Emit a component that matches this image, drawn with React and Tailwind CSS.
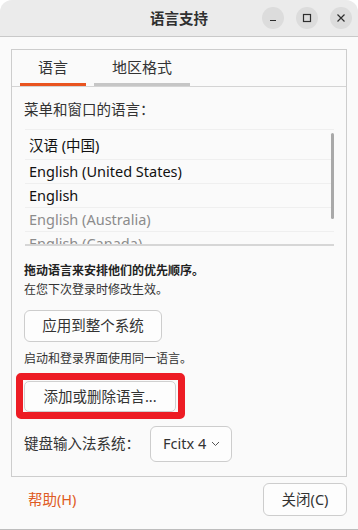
import React from "react";

const font = { fontFamily: '"Noto Sans", "Noto Sans CJK SC", sans-serif' };

const langs = [
  { label: "汉语 (中国)", active: true },
  { label: "English (United States)", active: true },
  { label: "English", active: true },
  { label: "English (Australia)", active: false },
  { label: "English (Canada)", active: false },
];

const TitleButton = ({ children }) => (
  <div className="w-[22px] h-[22px] rounded-full bg-[#dcdcdc] flex items-center justify-center text-[#2e2e2e]">
    {children}
  </div>
);

export default function App() {
  return (
    <div
      style={font}
      className="w-[358px] h-[530px] bg-[#fafafa] rounded-t-[12px] border-b border-[#bdbdbd] flex flex-col overflow-hidden text-[#2c2c2c]"
    >
      {/* Title bar */}
      <div className="h-[37px] shrink-0 bg-[#ebebeb] border-b border-[#c9c9c9] relative flex items-center justify-center">
        <span className="text-[14.5px] font-bold text-[#303030] mt-[2px]">语言支持</span>
        <div className="absolute right-[6px] top-[7px] flex gap-[12px]">
          <TitleButton>
            <svg width="10" height="10" viewBox="0 0 10 10">
              <path d="M2 7.5h6" stroke="currentColor" strokeWidth="1.2" />
            </svg>
          </TitleButton>
          <TitleButton>
            <svg width="10" height="10" viewBox="0 0 10 10">
              <rect x="1.5" y="1.5" width="7" height="7" fill="none" stroke="currentColor" strokeWidth="1.2" />
            </svg>
          </TitleButton>
          <TitleButton>
            <svg width="10" height="10" viewBox="0 0 10 10">
              <path d="M1.5 1.5l7 7M8.5 1.5l-7 7" stroke="currentColor" strokeWidth="1.2" />
            </svg>
          </TitleButton>
        </div>
      </div>

      {/* Body */}
      <div className="flex-1 flex flex-col px-[11px] pt-[12px]">
        <div className="h-[428px] border border-[#cdcdcd] flex flex-col">
          {/* Tabs */}
          <div className="h-[37px] shrink-0 border-b border-[#d4d4d4] flex items-end pl-[8px] gap-[8px]">
            <div className="w-[66px] h-full flex flex-col">
              <div className="flex-1 flex items-center justify-center text-[15px] text-[#333] pt-[2px]">语言</div>
              <div className="h-[3px] bg-[#e95420]" />
            </div>
            <div className="w-[96px] h-full flex flex-col">
              <div className="flex-1 flex items-center justify-center text-[15px] text-[#333] pt-[2px]">地区格式</div>
              <div className="h-[3px] bg-[#c6c6c6]" />
            </div>
          </div>

          {/* Content */}
          <div className="flex-1 flex flex-col px-[12px]">
            <div className="h-[42px] flex items-end pb-[8px] text-[14.5px] text-[#333]">菜单和窗口的语言：</div>

            <div className="relative h-[117px] ml-[1px] w-[309px] border-t border-[#efefef] border-b-2 border-b-[#d6d6d6] overflow-hidden pt-[4px]">
              {langs.map((l, i) => (
                <div
                  key={i}
                  className={`flex items-center pl-[4px] border-b border-[#efefef] text-[14.5px] whitespace-nowrap ${
                    i === 0 ? "h-[26px] pb-[2px]" : "h-[24px]"
                  } ${l.active ? "text-[#111]" : "text-[#8c8c8c]"}`}
                >
                  {l.label}
                </div>
              ))}
              <div className="absolute right-[0px] top-[3px] w-[3px] h-[86px] rounded-full bg-[#a9a9a9]" />
            </div>

            <div className="mt-[16px] text-[12px] font-bold text-[#222] leading-[18px]">拖动语言来安排他们的优先顺序。</div>
            <div className="text-[12px] text-[#333] leading-[18px] mt-[1px]">在您下次登录时修改生效。</div>

            <button className="mt-[11px] w-[138px] h-[32px] rounded-[6px] border border-[#cdcdcd] bg-[#fdfdfd] text-[14.5px] text-[#333]">
              应用到整个系统
            </button>

            <div className="mt-[8px] text-[12px] text-[#333] leading-[18px]">启动和登录界面使用同一语言。</div>

            <div className="relative mt-[13px] w-[152px]">
              <button className="w-[152px] h-[31px] rounded-[5px] border border-[#d0d0d0] bg-[#fdfdfd] text-[14.5px] text-[#333]">
                添加或删除语言...
              </button>
              <div className="absolute left-[-8px] right-[-9px] top-[-8px] bottom-[-7px] border-[7px] border-[#ed1c24] rounded-[5px] pointer-events-none" />
            </div>

            <div className="mt-[14px] flex items-center">
              <span className="text-[14.5px] text-[#333] w-[126px] whitespace-nowrap">键盘输入法系统：</span>
              <div className="w-[82px] h-[36px] rounded-[6px] border border-[#cdcdcd] bg-[#fdfdfd] flex items-center pl-[12px] gap-[5px] text-[14.5px] text-[#333]">
                <span className="whitespace-nowrap">Fcitx 4</span>
                <svg width="9" height="6" viewBox="0 0 9 6" className="text-[#555]">
                  <path d="M1 1l3.5 3.5L8 1" fill="none" stroke="currentColor" strokeWidth="1" />
                </svg>
              </div>
            </div>
          </div>
        </div>

        {/* Footer */}
        <div className="flex items-center justify-between mt-[6px] pl-[17px]">
          <span className="text-[14.5px] text-[#df5a23]">帮助(H)</span>
          <button className="w-[84px] h-[33px] rounded-[6px] border border-[#cdcdcd] bg-[#fdfdfd] text-[14.5px] text-[#333]">
            关闭(C)
          </button>
        </div>
      </div>
    </div>
  );
}
